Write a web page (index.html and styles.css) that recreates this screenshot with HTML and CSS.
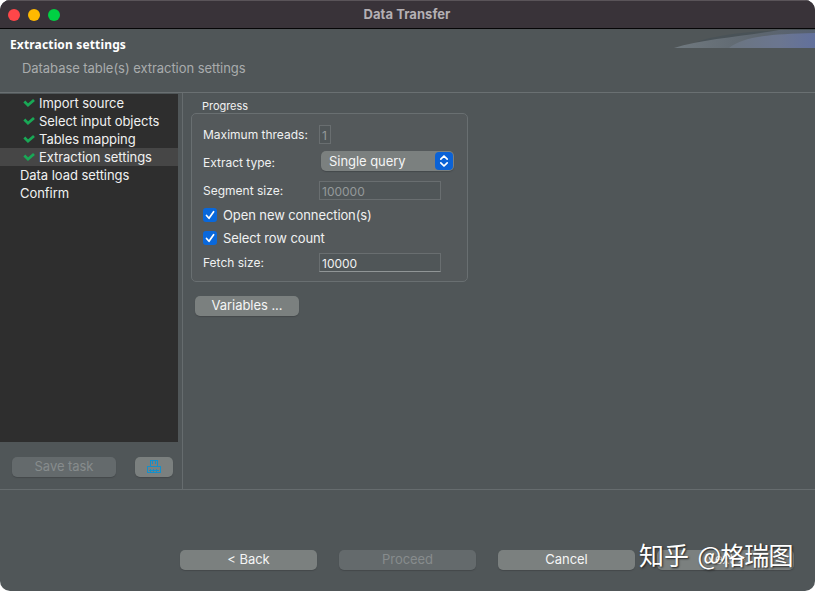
FILE: index.html
```html
<!DOCTYPE html>
<html lang="en">

<head>
    <meta charset="UTF-8">
    <meta name="viewport" content="width=device-width, initial-scale=1.0">
    <title>Data Transfer</title>
    <link rel="stylesheet" href="styles.css">
</head>

<body>
    <div class="window">
        <div class="titlebar">
            <span class="light red"></span>
            <span class="light yellow"></span>
            <span class="light green"></span>
            <h1>Data Transfer</h1>
        </div>

        <header class="banner">
            <h2>Extraction settings</h2>
            <p>Database table(s) extraction settings</p>
            <svg class="swoosh" width="141" height="19" viewBox="0 0 141 19">
                <defs>
                    <linearGradient id="outer">
                        <stop offset="0" stop-color="#70797f" />
                        <stop offset="0.6" stop-color="#5d666f" />
                        <stop offset="1" stop-color="#566070" />
                    </linearGradient>
                    <linearGradient id="inner">
                        <stop offset="0" stop-color="#6b7580" />
                        <stop offset="0.6" stop-color="#6b7690" />
                        <stop offset="1" stop-color="#62709c" />
                    </linearGradient>
                </defs>
                <path d="M22 13C50 4 90 1 141 0V10H60Z" fill="#495257" />
                <path d="M0 19C28 10 72 7 105 1H141V19Z" fill="url(#outer)" />
                <path d="M55 19C68 9 88 5 141 4V19Z" fill="url(#inner)" />
            </svg>
        </header>

        <main class="content">
            <aside class="sidebar">
                <ul class="steps">
                    <li class="done"><svg class="tick" viewBox="0 0 12 10"><path d="M1.3 3.6L5 7.2L11 2" /></svg>Import source</li>
                    <li class="done"><svg class="tick" viewBox="0 0 12 10"><path d="M1.3 3.6L5 7.2L11 2" /></svg>Select input objects</li>
                    <li class="done"><svg class="tick" viewBox="0 0 12 10"><path d="M1.3 3.6L5 7.2L11 2" /></svg>Tables mapping</li>
                    <li class="done active"><svg class="tick" viewBox="0 0 12 10"><path d="M1.3 3.6L5 7.2L11 2" /></svg>Extraction settings</li>
                    <li>Data load settings</li>
                    <li>Confirm</li>
                </ul>
                <div class="task-buttons">
                    <button class="save" disabled>Save task</button>
                    <button class="tool" aria-label="Task settings">
                        <svg width="14" height="13" viewBox="0 0 14 13">
                            <path d="M3.5 6.5V.5h7v6M.5 12.5v-6h13v6zM5.5 1v3M8.5 1v3M3.5 9v3M6.5 9v3M9.5 9v3M2 10.5h10" />
                        </svg>
                    </button>
                </div>
            </aside>

            <section class="page">
                <h3>Progress</h3>
                <div class="group">
                    <div class="row threads">
                        <label for="threads">Maximum threads:</label>
                        <input type="text" id="threads" value="1" disabled>
                    </div>
                    <div class="row type">
                        <span class="label">Extract type:</span>
                        <button class="select">Single query
                            <span class="arrows"><svg width="18" height="18" viewBox="0 0 18 18"><path d="M5.8 7.2L9 4L12.2 7.2M5.8 10.8L9 14L12.2 10.8" /></svg></span>
                        </button>
                    </div>
                    <div class="row segment">
                        <label for="segment">Segment size:</label>
                        <input type="text" id="segment" value="100000" disabled>
                    </div>
                    <label class="check"><input type="checkbox" checked><svg viewBox="0 0 14 14"><path d="M3.5 7.5L6 10.3L10.6 3.7" /></svg>Open new connection(s)</label>
                    <label class="check"><input type="checkbox" checked><svg viewBox="0 0 14 14"><path d="M3.5 7.5L6 10.3L10.6 3.7" /></svg>Select row count</label>
                    <div class="row fetch">
                        <label for="fetch">Fetch size:</label>
                        <input type="text" id="fetch" value="10000">
                    </div>
                </div>
                <button class="variables">Variables ...</button>
            </section>
        </main>

        <footer class="actions">
            <button>&lt; Back</button>
            <button disabled>Proceed</button>
            <button>Cancel</button>
            <button>Next &gt;</button>
        </footer>
        <div class="watermark">知乎 <span>@格瑞图</span></div>
    </div>
</body>

</html>
```
FILE: styles.css
```css
* {
    box-sizing: border-box;
}

body {
    margin: 0;
    background-color: #fff;
    color: #f0f1f1;
    font-family: Inter, "Liberation Sans", sans-serif;
    font-size: 13px;
    letter-spacing: -0.05px;
}

h1, h2, h3, p, ul {
    margin: 0;
    padding: 0;
}

.window {
    position: relative;
    display: flex;
    flex-direction: column;
    width: 815px;
    height: 591px;
    overflow: hidden;
    border-radius: 10px;
    background-color: #505658;
}

.titlebar {
    display: flex;
    align-items: center;
    gap: 8px;
    height: 29px;
    padding: 0 8px;
    background-color: #393339;
    border-top: 1px solid #5a5459;
    border-bottom: 1px solid #050506;
}

.titlebar h1 {
    flex: 1;
    margin-right: 61px;
    padding-bottom: 2px;
    color: #b4b0b4;
    font-size: 13px;
    font-weight: 700;
    letter-spacing: 0.05px;
    text-align: center;
}

.light {
    width: 12px;
    height: 12px;
    border-radius: 50%;
}

.red {
    background-color: #ff4649;
}

.yellow {
    background-color: #ffb900;
}

.green {
    background-color: #00d143;
}

.banner {
    position: relative;
    height: 64px;
    padding: 8px 10px;
    border-bottom: 1px solid #6a7072;
}

.banner h2 {
    font-family: "Noto Sans", sans-serif;
    font-size: 12px;
    letter-spacing: 0.15px;
    line-height: 16px;
    color: #fff;
}

.banner p {
    margin: 6px 0 0 12px;
    color: #a9acad;
    line-height: 18px;
}

.swoosh {
    position: absolute;
    top: 0;
    right: 0;
}

.content {
    display: flex;
    height: 397px;
    border-bottom: 1px solid #666c6e;
}

.sidebar {
    width: 183px;
    padding-top: 1px;
    border-right: 1px solid #666c6e;
}

.steps {
    width: 178px;
    height: 348px;
    list-style-type: none;
    background-color: #2e2e2e;
}

.steps li {
    display: flex;
    align-items: center;
    height: 18px;
    padding-left: 20px;
}

.steps .active {
    background-color: #464646;
}

.tick {
    width: 12px;
    height: 10px;
    margin: 0 4px 0 3px;
    fill: none;
    stroke: #19a856;
    stroke-width: 2.8;
}

button {
    flex-shrink: 0;
    height: 20px;
    padding: 0 0 2px;
    border: none;
    border-radius: 5px;
    background-color: #7b807f;
    box-shadow: 0 1px 1px #44494b;
    color: #f4f5f5;
    font: inherit;
    letter-spacing: inherit;
}

button:disabled {
    background-color: #646a6c;
    color: #878c8d;
}

.task-buttons {
    display: flex;
    gap: 19px;
    padding: 15px 0 0 12px;
}

.save {
    width: 104px;
}

.tool {
    display: flex;
    align-items: center;
    justify-content: center;
    width: 38px;
    padding: 0 1px 1px 0;
}

.tool svg {
    fill: none;
    stroke: #168fc9;
    shape-rendering: crispEdges;
}

.page {
    padding: 6px 0 0 8px;
}

.page h3 {
    margin-left: 11px;
    font-size: 11px;
    font-weight: 400;
    line-height: 14px;
}

.group {
    width: 277px;
    height: 169px;
    padding: 10px 11px 0;
    border: 1px solid #696f71;
    border-radius: 5px;
    background-color: #54595b;
}

.row {
    display: flex;
    align-items: center;
    height: 20px;
}

.row label,
.row .label {
    width: 116px;
    font-size: 12px;
    letter-spacing: 0;
}

.row input {
    width: 122px;
    height: 19px;
    padding: 2px 2px 0;
    border: 1px solid #696e70;
    background-color: #505658;
    color: #f0f1f1;
    font: inherit;
    font-size: 12px;
}

.row input:disabled {
    color: #94999a;
}

.row #threads {
    width: 12px;
}

.row #fetch {
    border-bottom-color: #909596;
}

.type,
.segment {
    margin-top: 8px;
}

.select {
    display: flex;
    align-items: center;
    justify-content: space-between;
    width: 133px;
    margin: -3px 0 0 2px;
    padding: 0 1px 0 8px;
}

.arrows {
    width: 18px;
    height: 18px;
    border-radius: 4px;
    background-color: #0b62d6;
}

.arrows path,
.check path {
    fill: none;
    stroke: #fff;
    stroke-width: 1.7;
    stroke-linecap: round;
    stroke-linejoin: round;
}

.check {
    display: flex;
    align-items: center;
    height: 23px;
    letter-spacing: -0.1px;
}

.segment + .check {
    margin-top: 3px;
}

.check input {
    display: none;
}

.check svg {
    width: 14px;
    height: 14px;
    margin-right: 6px;
    border-radius: 3px;
    background-color: #0968dc;
}

.fetch {
    margin-top: 3px;
}

.variables {
    width: 104px;
    margin: 14px 0 0 4px;
}

.actions {
    display: flex;
    gap: 22px;
    padding: 60px 0 0 180px;
}

.actions button {
    width: 137px;
}

.watermark {
    position: absolute;
    top: 536px;
    left: 639px;
    color: #fff;
    font-family: "Noto Sans CJK SC", sans-serif;
    font-size: 25px;
    font-weight: 400;
    line-height: 36px;
    white-space: nowrap;
    text-shadow: 1px 1px 2px #222;
}

.watermark span {
    margin-left: 3px;
    letter-spacing: -0.9px;
}
```
